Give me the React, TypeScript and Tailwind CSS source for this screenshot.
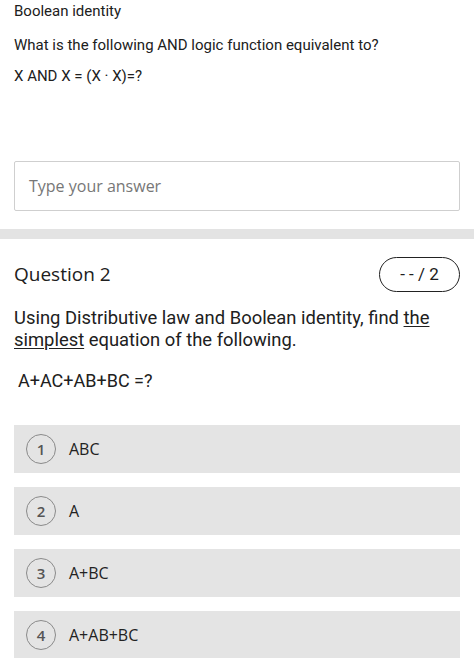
const options = [
  { n: 1, label: 'ABC' },
  { n: 2, label: 'A' },
  { n: 3, label: 'A+BC' },
  { n: 4, label: 'A+AB+BC' },
];

const OptionRow = ({ n, label }: { n: number; label: string }) => (
  <div className="flex h-[48px] items-center bg-[#e4e4e4] pl-[12px]">
    <div className="flex h-[30px] w-[30px] items-center justify-center rounded-full border border-[#8a8a8a] text-[15px] font-semibold text-[#555] [font-family:'Open_Sans',sans-serif]">
      {n}
    </div>
    <span className="ml-[13px] text-[16px] text-[#222] [font-family:'Open_Sans',sans-serif]">{label}</span>
  </div>
);

export default function App() {
  return (
    <div className="h-[658px] w-[474px] overflow-hidden bg-white text-[#202020] [font-family:Roboto,sans-serif]">
      <div className="px-[14px]">
        <p className="pt-[1px] text-[15px] leading-[20px]">Boolean identity</p>
        <p className="mt-[14px] text-[15px] leading-[20px]">What is the following AND logic function equivalent to?</p>
        <p className="mt-[11px] text-[15px] leading-[20px]">X AND X = (X · X)=?</p>

        <div className="mt-[75px] flex h-[50px] items-center rounded-[2px] border border-[#cfcfcf] px-[14px]">
          <span className="text-[16px] text-[#777] [font-family:'Open_Sans',sans-serif]">Type your answer</span>
        </div>
      </div>

      <div className="mt-[18px] h-[10px] bg-[#e3e3e3]" />

      <div className="px-[14px]">
        <div className="mt-[18px] flex items-center justify-between">
          <h2 className="text-[19px] [font-family:'Open_Sans',sans-serif]">Question 2</h2>
          <div className="flex h-[35px] w-[81px] items-center justify-center rounded-full border-[1.5px] border-[#222] text-[17px]">
            - - / 2
          </div>
        </div>

        <p className="mt-[15px] text-[18.4px] leading-[22px]">
          Using Distributive law and Boolean identity, find <span className="underline underline-offset-2">the simplest</span> equation of the following.
        </p>
        <p className="mt-[16px] pl-[4px] text-[18px]">A+AC+AB+BC =?</p>

        <div className="mt-[31px] flex flex-col gap-[14px]">
          {options.map((o) => (
            <OptionRow key={o.n} n={o.n} label={o.label} />
          ))}
        </div>
      </div>
    </div>
  );
}
